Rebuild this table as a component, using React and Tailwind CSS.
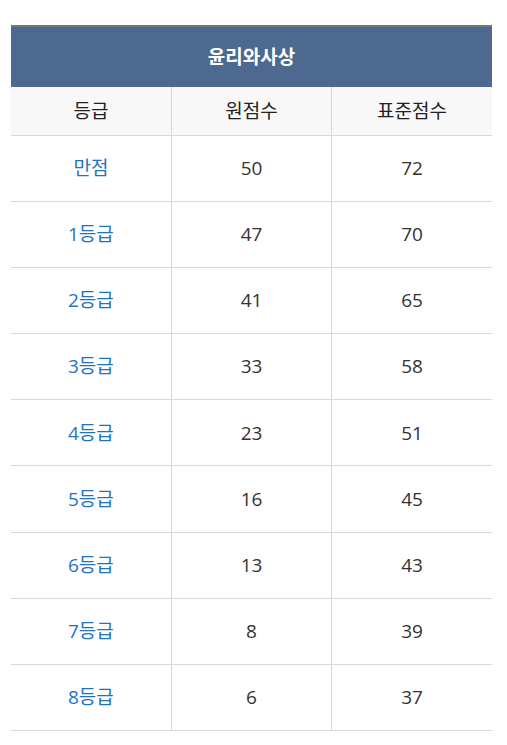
import React from "react";

const rows = [
  ["만점", "50", "72"],
  ["1등급", "47", "70"],
  ["2등급", "41", "65"],
  ["3등급", "33", "58"],
  ["4등급", "23", "51"],
  ["5등급", "16", "45"],
  ["6등급", "13", "43"],
  ["7등급", "8", "39"],
  ["8등급", "6", "37"],
];

export default function App() {
  return (
    <div className="bg-white w-[507px] h-[745px] pt-[25px] px-[11px] font-['Open_Sans','Noto_Sans_CJK_KR',sans-serif]">
      <table className="w-[481px] border-collapse table-fixed border-t-2 border-[#777777]">
        <thead>
          <tr>
            <th colSpan={3} className="h-[61px] bg-[#4d6990] text-white text-[19px] font-bold">
              윤리와사상
            </th>
          </tr>
          <tr className="bg-[#f8f8f8]">
            <th className="w-[160px] h-[48px] font-normal text-[19px] text-[#222] border-r border-b border-[#d9d9d9]">등급</th>
            <th className="w-[160px] font-normal text-[19px] text-[#222] border-r border-b border-[#d9d9d9]">원점수</th>
            <th className="font-normal text-[19px] text-[#222] border-b border-[#d9d9d9]">표준점수</th>
          </tr>
        </thead>
        <tbody>
          {rows.map((r) => (
            <tr key={r[0]}>
              <td className="h-[66.2px] text-center text-[19px] text-[#1e73c3] border-r border-b border-[#d9d9d9]">{r[0]}</td>
              <td className="text-center text-[19px] text-[#333] border-r border-b border-[#d9d9d9]">{r[1]}</td>
              <td className="text-center text-[19px] text-[#333] border-b border-[#d9d9d9]">{r[2]}</td>
            </tr>
          ))}
        </tbody>
      </table>
    </div>
  );
}
